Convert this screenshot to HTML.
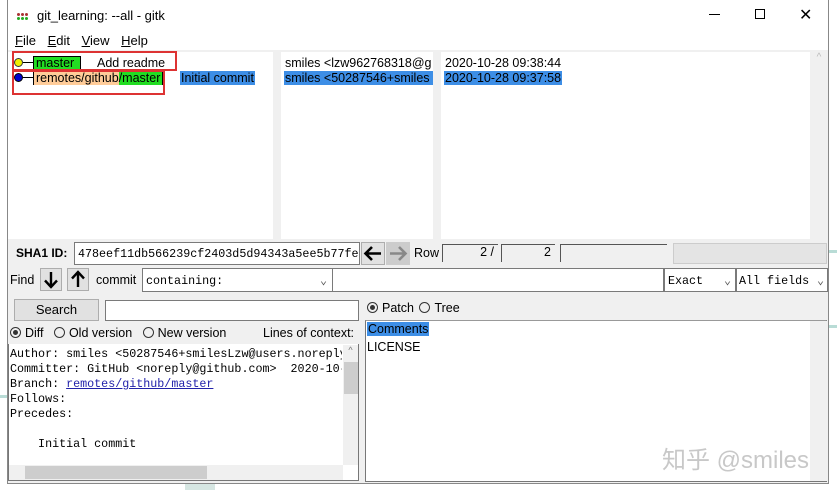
<!DOCTYPE html>
<html><head><meta charset="utf-8"><style>
*{margin:0;padding:0;box-sizing:border-box}
body{width:837px;height:490px;background:#fff;position:relative;overflow:hidden;font-family:"Liberation Sans",Arial,sans-serif;font-size:12.5px;color:#000}
.a{position:absolute}
.mono{font-family:"Liberation Mono",monospace;font-size:11.7px}
.win{left:7px;top:0;width:822px;height:484px;background:#f0f0f0;border:1px solid #888;border-top:none}
.w{background:#fff}
.sel{background:#3d8ee6;color:#000}
.inp{background:#fff;border:1px solid #7a7a7a}
.btn{background:#e1e1e1;border:1px solid #adadad}
.rad{display:inline-block;width:11px;height:11px;border:1px solid #333;border-radius:50%;vertical-align:-1px;margin-right:4px;position:relative}
.rad.on::after{content:"";position:absolute;left:2px;top:2px;width:5px;height:5px;border-radius:50%;background:#333}
.d{position:absolute;width:3px;height:3px;border-radius:50%}
</style></head><body>
<div class="a" style="left:829px;top:250px;width:8px;height:3px;background:#b9dcd6"></div>
<div class="a" style="left:829px;top:325px;width:8px;height:3px;background:#b9dcd6"></div>
<div class="a" style="left:0;top:395px;width:7px;height:3px;background:#b9dcd6"></div>
<div class="a" style="left:185px;top:484px;width:30px;height:6px;background:#d6e6e2"></div>
<div class="a win"></div>
<!-- title bar -->
<div class="a w" style="left:8px;top:0;width:820px;height:50px"></div>
<div class="d" style="left:17px;top:13px;background:#a33"></div>
<div class="d" style="left:21px;top:13px;background:#a33"></div>
<div class="d" style="left:25px;top:13px;background:#a33"></div>
<div class="d" style="left:17px;top:17px;background:#2a2"></div>
<div class="d" style="left:21px;top:17px;background:#2a2"></div>
<div class="d" style="left:25px;top:17px;background:#2a2"></div>
<div class="a" style="left:37px;top:8px;font-size:13px">git_learning: --all - gitk</div>
<div class="a" style="left:709px;top:14px;width:11px;height:1px;background:#000"></div>
<div class="a" style="left:755px;top:9px;width:10px;height:10px;border:1px solid #000"></div>
<div class="a" style="left:799px;top:5px;font-size:16px">✕</div>
<div class="a" style="left:15px;top:33px;font-size:13px;word-spacing:8px"><u>F</u>ile <u>E</u>dit <u>V</u>iew <u>H</u>elp</div>
<!-- top panes -->
<div class="a w" style="left:8px;top:52px;width:265px;height:187px"></div>
<div class="a w" style="left:281px;top:52px;width:152px;height:187px"></div>
<div class="a w" style="left:441px;top:52px;width:369px;height:187px"></div>
<div class="a" style="left:810px;top:52px;width:18px;height:187px;background:#f0f0f0;color:#bbb;font-size:10px;text-align:center">^</div>
<div class="a" style="left:14px;top:58px;width:9px;height:9px;border-radius:50%;background:#ee0;border:1px solid #333"></div>
<div class="a" style="left:23px;top:62px;width:10px;height:1px;background:#000"></div>
<div class="a" style="left:33px;top:56px;width:48px;height:14px;background:#2d2;border:1px solid #000;padding-left:2px;line-height:12px">master</div>
<div class="a" style="left:97px;top:56px">Add readme</div>
<div class="a" style="left:14px;top:73px;width:9px;height:9px;border-radius:50%;background:#00c;border:1px solid #000"></div>
<div class="a" style="left:23px;top:77px;width:10px;height:1px;background:#000"></div>
<div class="a" style="left:33px;top:71px;height:14px;border:1px solid #000;line-height:12px;white-space:nowrap"><span style="background:#fc9;padding-left:2px">remotes/github</span><span style="background:#2d2;padding-right:2px">/master</span></div>
<div class="a sel" style="left:180px;top:71px;padding:0 1px">Initial commit</div>
<div class="a" style="left:12px;top:51px;width:165px;height:20px;border:2px solid #d33"></div>
<div class="a" style="left:12px;top:70px;width:153px;height:25px;border:2px solid #d33"></div>
<div class="a" style="left:285px;top:56px;white-space:nowrap;width:148px;overflow:hidden">smiles &lt;lzw962768318@g</div>
<div class="a sel" style="left:284px;top:71px;white-space:nowrap;width:149px;overflow:hidden;padding-left:1px">smiles &lt;50287546+smiles</div>
<div class="a" style="left:445px;top:56px">2020-10-28 09:38:44</div>
<div class="a sel" style="left:444px;top:71px;padding:0 1px">2020-10-28 09:37:58</div>
<!-- SHA row -->
<div class="a" style="left:16px;top:246px;font-weight:bold;font-size:12px">SHA1 ID:</div>
<div class="a inp mono" style="left:74px;top:242px;width:286px;height:23px;padding:4px 3px;white-space:nowrap;overflow:hidden">478eef11db566239cf2403d5d94343a5ee5b77fe</div>
<div class="a btn" style="left:361px;top:242px;width:24px;height:23px"><svg width="22" height="21"><path d="M19 10.5H4M10 4L3.5 10.5L10 17" stroke="#000" stroke-width="2.6" fill="none"/></svg></div>
<div class="a" style="left:386px;top:242px;width:24px;height:23px;background:#ccc"><svg width="24" height="23"><path d="M4 11.5H19M13 5L19.5 11.5L13 18" stroke="#888" stroke-width="2.6" fill="none"/></svg></div>
<div class="a" style="left:414px;top:246px">Row</div>
<div class="a" style="left:442px;top:244px;width:56px;height:18px;border-top:1px solid #555;border-left:1px solid #555;text-align:right;padding-right:4px">2 /</div>
<div class="a" style="left:501px;top:244px;width:54px;height:18px;border-top:1px solid #555;border-left:1px solid #555;text-align:right;padding-right:4px">2</div>
<div class="a" style="left:560px;top:244px;width:107px;height:18px;border-top:1px solid #555;border-left:1px solid #555"></div>
<div class="a" style="left:673px;top:243px;width:154px;height:21px;background:#e4e4e4;border:1px solid #ccc"></div>
<!-- find row -->
<div class="a" style="left:10px;top:273px">Find</div>
<div class="a btn" style="left:40px;top:268px;width:22px;height:23px"><svg width="20" height="21"><path d="M10 3V18M4 11.5L10 18L16 11.5" stroke="#000" stroke-width="2.4" fill="none"/></svg></div>
<div class="a btn" style="left:67px;top:268px;width:22px;height:23px"><svg width="20" height="21"><path d="M10 18V3M4 9.5L10 3L16 9.5" stroke="#000" stroke-width="2.4" fill="none"/></svg></div>
<div class="a" style="left:96px;top:273px">commit</div>
<div class="a inp mono" style="left:142px;top:268px;width:191px;height:24px;padding:5px 3px">containing:<span style="position:absolute;right:5px;top:4px;color:#555">&#8964;</span></div>
<div class="a inp" style="left:333px;top:268px;width:331px;height:24px;border-left:none"></div>
<div class="a inp mono" style="left:664px;top:268px;width:72px;height:24px;padding:5px 3px">Exact<span style="position:absolute;right:4px;top:4px;color:#555">&#8964;</span></div>
<div class="a inp mono" style="left:736px;top:268px;width:92px;height:24px;padding:5px 2px">All fields<span style="position:absolute;right:3px;top:4px;color:#555">&#8964;</span></div>
<!-- search row -->
<div class="a btn" style="left:14px;top:299px;width:85px;height:22px;text-align:center;line-height:20px;font-size:13px">Search</div>
<div class="a inp" style="left:105px;top:300px;width:254px;height:21px"></div>
<div class="a" style="left:367px;top:301px"><span class="rad on"></span>Patch <span class="rad" style="margin-left:2px"></span>Tree</div>
<div class="a" style="left:10px;top:326px"><span class="rad on"></span>Diff &nbsp;&nbsp;<span class="rad"></span>Old version &nbsp;&nbsp;<span class="rad"></span>New version</div>
<div class="a" style="left:263px;top:326px">Lines of context:</div>
<!-- lower left -->
<div class="a w" style="left:8px;top:344px;width:351px;height:137px;border:1px solid #777;border-top:none"></div>
<div class="a mono" style="left:10px;top:347px;line-height:15px;white-space:pre;width:332px;overflow:hidden">Author: smiles &lt;50287546+smilesLzw@users.noreply
Committer: GitHub &lt;noreply@github.com&gt;  2020-10-
Branch: <u style="color:#22a">remotes/github/master</u>
Follows:
Precedes:

    Initial commit</div>
<div class="a" style="left:343px;top:345px;width:15px;height:120px;background:#f0f0f0;color:#777;font-size:9px;text-align:center">^</div>
<div class="a" style="left:344px;top:362px;width:14px;height:32px;background:#cdcdcd"></div>
<div class="a" style="left:9px;top:465px;width:334px;height:15px;background:#f0f0f0"></div>
<div class="a" style="left:25px;top:466px;width:182px;height:13px;background:#cdcdcd"></div>
<!-- lower right -->
<div class="a w" style="left:365px;top:320px;width:462px;height:162px;border:1px solid #777;border-top:1px solid #999"></div>
<div class="a" style="left:810px;top:321px;width:17px;height:160px;background:#f0f0f0"></div>
<div class="a sel" style="left:367px;top:322px;padding:0 1px">Comments</div>
<div class="a" style="left:367px;top:340px">LICENSE</div>
<div class="a" style="left:662px;top:440px;font-size:24px;color:#c8c8c8;font-family:'Liberation Sans','Noto Sans CJK SC',sans-serif">知乎 @smiles</div>
</body></html>
